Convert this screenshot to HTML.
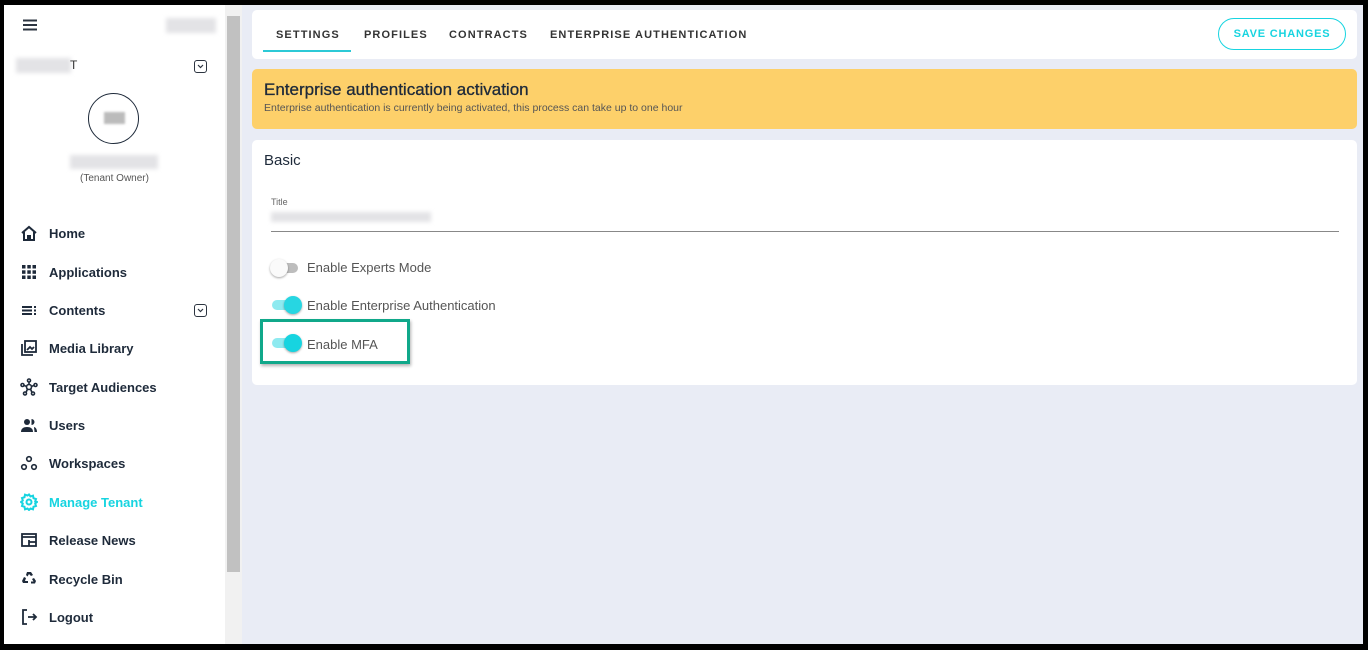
<!DOCTYPE html>
<html><head><meta charset="utf-8"><style>
*{box-sizing:border-box;margin:0;padding:0}
body{width:1368px;height:650px;background:#000;position:relative;overflow:hidden;font-family:"Liberation Sans",sans-serif;color:#1e2a3a}
.side{position:absolute;left:4px;top:5px;width:221px;height:639px;background:#fff}
.track{position:absolute;left:225px;top:5px;width:17px;height:639px;background:#f1f1f1}
.thumb{position:absolute;left:227px;top:16px;width:13px;height:556px;background:#c1c1c1}
.main{position:absolute;left:242px;top:5px;width:1121px;height:639px;background:#e9ecf5}
.card{position:absolute;background:#fff;border-radius:5px}
.nav{position:absolute;left:16px;font-size:13px;font-weight:bold;color:#1e2a3a;display:flex;align-items:center}
.nav svg{width:18px;height:18px;margin-right:11px}
.blur{position:absolute;background:#e3e3e6;filter:blur(2px)}
.tab{position:absolute;top:29px;font-size:11px;letter-spacing:1.1px;font-weight:bold;color:#333}
.tog{position:absolute;left:272px;width:26px;height:10px;border-radius:5px}
.knob{position:absolute;top:-4px;width:18px;height:18px;border-radius:50%;box-shadow:0 1px 2px rgba(0,0,0,.35)}
.lbl{position:absolute;left:307px;font-size:13px;color:#555}
.chev{position:absolute;left:190px;width:13px;height:13px;border:1.4px solid #2c3440;border-radius:3px}
</style></head><body>
<div class="side">
 <svg style="position:absolute;left:18px;top:14px" width="16" height="12"><path d="M1 1.5h14M1 6h14M1 10.5h14" stroke="#2c3440" stroke-width="2"/></svg>
 <div class="blur" style="left:162px;top:13px;width:50px;height:15px"></div>
 <div class="blur" style="left:12px;top:53px;width:55px;height:15px"></div>
 <div style="position:absolute;left:66px;top:53px;font-size:12px;color:#333">T</div>
 <div class="chev" style="top:55px"><svg width="11" height="11" style="position:absolute;left:0;top:0"><path d="M3 4l2.5 2.5L8 4" fill="none" stroke="#2c3440" stroke-width="1.2"/></svg></div>
 <div style="position:absolute;left:84px;top:88px;width:51px;height:51px;border:1.4px solid #1e2a3a;border-radius:50%"></div>
 <div class="blur" style="left:100px;top:107px;width:21px;height:12px;background:#bbb;filter:blur(1px)"></div>
 <div class="blur" style="left:66px;top:150px;width:88px;height:14px"></div>
 <div style="position:absolute;left:0;width:221px;text-align:center;top:168px;font-size:10px;color:#555">(Tenant Owner)</div>
 <div class="nav" style="top:219px"><svg viewBox="0 0 18 18"><path d="M2 9L9 3l7 6M4 8v8h4v-4h2v4h4V8" fill="none" stroke="#1e2a3a" stroke-width="2"/></svg>Home</div>
 <div class="nav" style="top:258px"><svg viewBox="0 0 18 18" fill="#1e2a3a"><rect x="2" y="2" width="3.5" height="3.5"/><rect x="7.3" y="2" width="3.5" height="3.5"/><rect x="12.5" y="2" width="3.5" height="3.5"/><rect x="2" y="7.3" width="3.5" height="3.5"/><rect x="7.3" y="7.3" width="3.5" height="3.5"/><rect x="12.5" y="7.3" width="3.5" height="3.5"/><rect x="2" y="12.5" width="3.5" height="3.5"/><rect x="7.3" y="12.5" width="3.5" height="3.5"/><rect x="12.5" y="12.5" width="3.5" height="3.5"/></svg>Applications</div>
 <div class="nav" style="top:296px"><svg viewBox="0 0 18 18" fill="#1e2a3a"><rect x="2" y="5" width="10" height="2"/><rect x="2" y="8.5" width="10" height="2"/><rect x="2" y="12" width="10" height="2"/><rect x="14" y="5" width="2" height="2"/><rect x="14" y="8.5" width="2" height="2"/><rect x="14" y="12" width="2" height="2"/></svg>Contents</div>
 <div class="chev" style="top:299px"><svg width="11" height="11" style="position:absolute;left:0;top:0"><path d="M3 4l2.5 2.5L8 4" fill="none" stroke="#2c3440" stroke-width="1.2"/></svg></div>
 <div class="nav" style="top:334px"><svg viewBox="0 0 18 18" fill="none" stroke="#1e2a3a" stroke-width="1.8"><path d="M2 5v11h11"/><rect x="5" y="2" width="11" height="11"/><path d="M7 11l3-3 2 2 2-2" /></svg>Media Library</div>
 <div class="nav" style="top:373px"><svg viewBox="0 0 18 18" fill="none" stroke="#1e2a3a" stroke-width="1.6"><circle cx="9" cy="9" r="2.5"/><circle cx="9" cy="2.5" r="1.5"/><circle cx="2.5" cy="7" r="1.5"/><circle cx="15.5" cy="7" r="1.5"/><circle cx="5" cy="15.5" r="1.5"/><circle cx="13" cy="15.5" r="1.5"/><path d="M9 4v2.5M4 7.5l3 1M14 7.5l-3 1M6 14.5l1.5-3.5M12 14.5l-1.5-3.5"/></svg>Target Audiences</div>
 <div class="nav" style="top:411px"><svg viewBox="0 0 18 18" fill="#1e2a3a"><circle cx="7" cy="6" r="3"/><path d="M1 16c0-3.5 2.5-5 6-5s6 1.5 6 5z"/><path d="M11.5 3a3 3 0 010 6zM14 11c2 .5 3 2.5 3 5h-2.5c0-2-.5-3.5-.5-5z"/></svg>Users</div>
 <div class="nav" style="top:449px"><svg viewBox="0 0 18 18" fill="none" stroke="#1e2a3a" stroke-width="1.6"><circle cx="9" cy="5" r="2.3"/><circle cx="4" cy="13" r="2.3"/><circle cx="14" cy="13" r="2.3"/></svg>Workspaces</div>
 <div class="nav" style="top:488px;color:#17d4e0"><svg viewBox="0 0 18 18" fill="none" stroke="#17d4e0" stroke-width="2"><circle cx="9" cy="9" r="2.5"/><path d="M9 1.5l1.5 2 2.5-.8.5 2.5 2.5.8-.8 2.5L17 9l-1.8 1.5.8 2.5-2.5.8-.5 2.5-2.5-.8L9 17l-1.5-1.5-2.5.8-.5-2.5-2.5-.8.8-2.5L1 9l1.8-1.5L2 5l2.5-.8L5 1.7l2.5.8z"/></svg>Manage Tenant</div>
 <div class="nav" style="top:526px"><svg viewBox="0 0 18 18" fill="none" stroke="#1e2a3a" stroke-width="1.8"><rect x="2" y="3" width="14" height="12"/><path d="M2 6h14M9 9v6M9 11h7" /></svg>Release News</div>
 <div class="nav" style="top:565px"><svg viewBox="0 0 18 18" fill="#1e2a3a"><path d="M7 2h4l2 3-2 1-2-2-1.5 2.5L6 5zM2 11l2-4 2 1-1 3h3v2H3zM16 11l-2-3-2 1 1.5 2.5H11v2h4z"/></svg>Recycle Bin</div>
 <div class="nav" style="top:603px"><svg viewBox="0 0 18 18" fill="none" stroke="#1e2a3a" stroke-width="1.8"><path d="M7 2H3v14h4M8 9h8M13 6l3 3-3 3"/></svg>Logout</div>
</div>
<div class="track"></div><div class="thumb"></div>
<div class="main"></div>
<div class="card" style="left:252px;top:10px;width:1105px;height:49px"></div>
<div class="tab" style="left:276px">SETTINGS</div>
<div style="position:absolute;left:263px;top:50px;width:88px;height:1.5px;background:#2cc9d6"></div>
<div class="tab" style="left:364px">PROFILES</div>
<div class="tab" style="left:449px">CONTRACTS</div>
<div class="tab" style="left:550px">ENTERPRISE AUTHENTICATION</div>
<div style="position:absolute;left:1218px;top:18px;width:128px;height:32px;border:1.3px solid #17d4e0;border-radius:16px;color:#17d4e0;font-size:11px;font-weight:bold;letter-spacing:0.8px;text-align:center;line-height:30px">SAVE CHANGES</div>
<div class="card" style="left:252px;top:69px;width:1105px;height:60px;background:#fdd06a"></div>
<div style="position:absolute;left:264px;top:80px;font-size:17px;color:#1e2a3a;-webkit-text-stroke:0.3px #1e2a3a">Enterprise authentication activation</div>
<div style="position:absolute;left:264px;top:102px;font-size:10.5px;color:#555">Enterprise authentication is currently being activated, this process can take up to one hour</div>
<div class="card" style="left:252px;top:140px;width:1105px;height:245px"></div>
<div style="position:absolute;left:264px;top:152px;font-size:15px;color:#1e2a3a">Basic</div>
<div style="position:absolute;left:271px;top:197px;font-size:9px;color:#666">Title</div>
<div class="blur" style="left:271px;top:212px;width:160px;height:10px"></div>
<div style="position:absolute;left:271px;top:231px;width:1068px;height:1px;background:#888"></div>
<div class="tog" style="top:263px;background:#bdbdbd"><div class="knob" style="left:-2px;background:#fafafa"></div></div>
<div class="lbl" style="top:260px">Enable Experts Mode</div>
<div class="tog" style="top:300px;background:#8eeaf0"><div class="knob" style="left:12px;background:#27d6e2"></div></div>
<div class="lbl" style="top:298px">Enable Enterprise Authentication</div>
<div class="tog" style="top:338px;background:#8eeaf0"><div class="knob" style="left:12px;background:#17d4e0"></div></div>
<div class="lbl" style="top:337px">Enable MFA</div>
<div style="position:absolute;left:260px;top:319px;width:150px;height:45px;border:3px solid #10a88a;box-shadow:1px 2px 3px rgba(0,0,0,.3)"></div>
</body></html>
